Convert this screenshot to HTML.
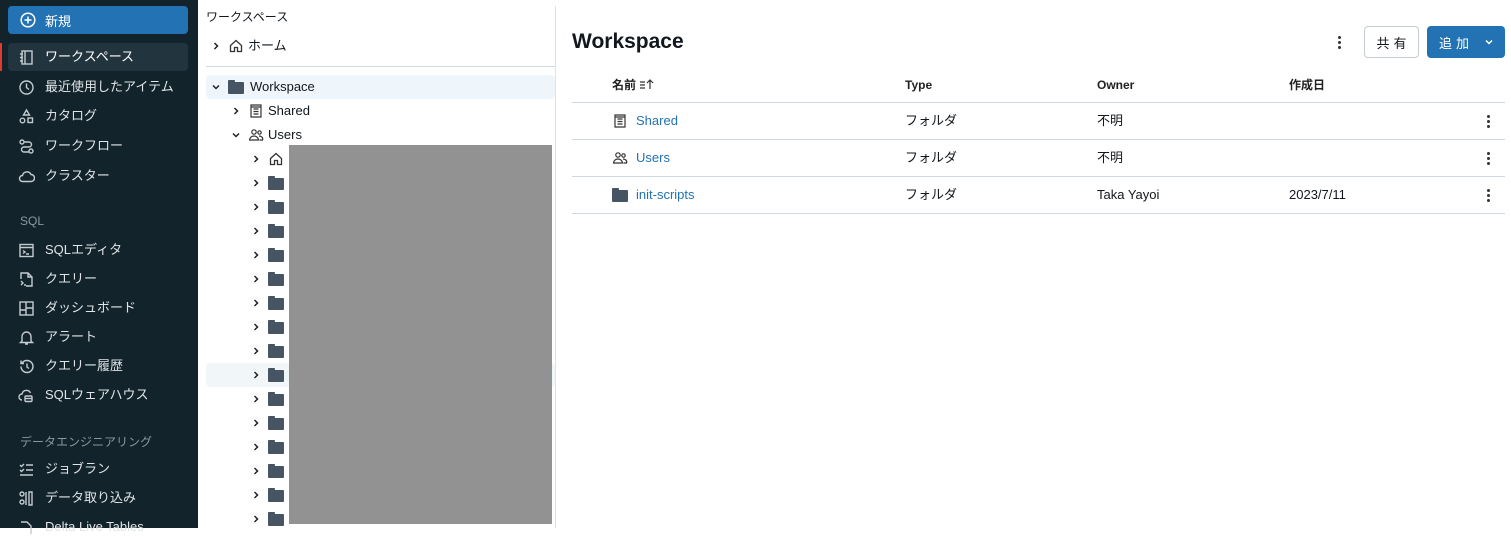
<!DOCTYPE html>
<html><head><meta charset="utf-8"><style>
*{margin:0;padding:0;box-sizing:border-box}
body{width:1511px;height:528px;overflow:hidden;background:#fff;font-family:"Liberation Sans","Noto Sans CJK JP",sans-serif;position:relative;color:#11171c}
.sb{position:absolute;left:0;top:0;width:198px;height:528px;background:#13232b;color:#dfe4e7;font-size:13px}
.sb .it{position:absolute;left:8px;width:180px;height:28px;display:flex;align-items:center;padding-left:10px;line-height:28px}
.sb .it svg{width:17px;height:17px;margin-right:10px;stroke:#c3cbd0;fill:none;stroke-width:1.4;flex:none}
.sb .hd{position:absolute;left:20px;font-size:12px;color:#8a979e}
.tr{position:absolute;font-size:13px;display:flex;align-items:center;height:22px;line-height:22px}
.ch{width:12px;height:12px;margin-right:6px;display:inline-block}
.fd{display:inline-block;width:16px;height:12px;background:#465463;border-radius:1px;position:relative;margin-right:6px;margin-top:2px}
.fd:before{content:"";position:absolute;left:0;top:-2px;width:7px;height:3px;background:#465463;border-radius:1px 1px 0 0}
.th{position:absolute;top:76px;font-size:12px;font-weight:bold;color:#222;height:18px;line-height:18px}
.hl{position:absolute;left:572px;width:933px;height:1px;background:#cdd9e3}
.rw{position:absolute;font-size:13px;height:20px;line-height:20px;display:flex;align-items:center}
.lk{color:#2272b4}
.dots{position:absolute;width:3px}
.dots i{display:block;width:3px;height:3px;background:#333;border-radius:50%;margin-bottom:2px}
</style></head><body>
<svg width="0" height="0" style="position:absolute"><defs>
<symbol id="cr" viewBox="0 0 12 12"><path d="M4.5 3l3 3-3 3" fill="none" stroke="#222" stroke-width="1.5"/></symbol>
<symbol id="cd" viewBox="0 0 12 12"><path d="M3 4.5l3 3 3-3" fill="none" stroke="#222" stroke-width="1.5"/></symbol>
</defs></svg>
<div class="sb">
 <div style="position:absolute;left:8px;top:6px;width:180px;height:28px;background:#2272b4;border-radius:4px;display:flex;align-items:center;padding-left:12px;color:#fff">
  <svg width="16" height="16" viewBox="0 0 16 16" style="margin-right:9px"><circle cx="8" cy="8" r="6.8" stroke="#fff" stroke-width="1.5" fill="none"/><path d="M8 4.5v7M4.5 8h7" stroke="#fff" stroke-width="1.5"/></svg>新規</div>
 <div style="position:absolute;left:0;top:43px;width:2px;height:28px;background:#e03a2f"></div>
 <div class="it" style="top:43px;background:#22353f;border-radius:4px;color:#fff"><svg viewBox="0 0 17 17"><rect x="4" y="2" width="10" height="13"/><path d="M7 2v13M2 5h3M2 8.5h3M2 12h3"/></svg>ワークスペース</div>
 <div class="it" style="top:73px"><svg viewBox="0 0 17 17"><circle cx="8.5" cy="8.5" r="6.5"/><path d="M8.5 4.5v4l2.5 2"/></svg>最近使用したアイテム</div>
 <div class="it" style="top:102px"><svg viewBox="0 0 17 17"><path d="M8.5 2l3 5h-6z"/><circle cx="4.5" cy="12.5" r="2.3"/><rect x="10" y="10" width="4.5" height="4.5"/></svg>カタログ</div>
 <div class="it" style="top:132px"><svg viewBox="0 0 17 17"><circle cx="4" cy="4" r="2"/><circle cx="13" cy="13" r="2"/><path d="M6 4h5a2.5 2.5 0 010 5H6a2.5 2.5 0 000 5h5"/></svg>ワークフロー</div>
 <div class="it" style="top:162px"><svg viewBox="0 0 17 17"><path d="M4.5 13.5a3 3 0 010-6 4.5 4.5 0 018.5-1 3.5 3.5 0 010 7z"/></svg>クラスター</div>
 <div class="hd" style="top:214px">SQL</div>
 <div class="it" style="top:236px"><svg viewBox="0 0 17 17"><rect x="2" y="2.5" width="13" height="12"/><path d="M2 5.5h13M5 8.5l2 1.5-2 1.5M8 12h3"/></svg>SQLエディタ</div>
 <div class="it" style="top:265px"><svg viewBox="0 0 17 17"><path d="M3 8V2h7l4 4v9H8M10 2v4h4M3 10l2 2-2 2M6 14h2"/></svg>クエリー</div>
 <div class="it" style="top:294px"><svg viewBox="0 0 17 17"><rect x="2" y="2" width="13" height="13"/><path d="M8 2v13M8 8h7M2 10h6"/></svg>ダッシュボード</div>
 <div class="it" style="top:323px"><svg viewBox="0 0 17 17"><path d="M4 12V7.5a4.5 4.5 0 019 0V12l1.5 1.5h-12zM7 15h3"/></svg>アラート</div>
 <div class="it" style="top:352px"><svg viewBox="0 0 17 17"><path d="M3 8.5a6 6 0 106-6 6 6 0 00-5 2.5M3 2.5v3h3M9 5.5v3.5l2 1.5"/></svg>クエリー履歴</div>
 <div class="it" style="top:381px"><svg viewBox="0 0 17 17"><path d="M4 13a3 3 0 010-6 4.5 4.5 0 018.5-1"/><rect x="7" y="9" width="7" height="5.5" rx="1"/><path d="M7 11.5h7"/></svg>SQLウェアハウス</div>
 <div class="hd" style="top:433px">データエンジニアリング</div>
 <div class="it" style="top:455px"><svg viewBox="0 0 17 17"><path d="M2 4l1.5 1.5L6 3M8 4h7M2 9l1.5 1.5L6 8M8 9h7M2 14h13"/></svg>ジョブラン</div>
 <div class="it" style="top:484px"><svg viewBox="0 0 17 17"><circle cx="4" cy="4" r="2"/><circle cx="4" cy="12" r="2"/><path d="M8 2v13M11 2v13h3V2z"/></svg>データ取り込み</div>
 <div class="it" style="top:513px"><svg viewBox="0 0 17 17"><path d="M3 3h6l4 4v8"/></svg>Delta Live Tables</div>
</div>

<div style="position:absolute;left:206px;top:8px;font-size:12px">ワークスペース</div>
<div class="tr" style="left:210px;top:35px"><svg class="ch"><use href="#cr"/></svg><svg width="16" height="16" viewBox="0 0 16 16" style="margin-right:4px"><path d="M2.5 7.5L8 2.5l5.5 5v6h-4v-4h-3v4h-4z" fill="none" stroke="#333" stroke-width="1.3"/></svg>ホーム</div>
<div style="position:absolute;left:206px;top:66px;width:349px;height:1px;background:#cdd9e3"></div>
<div style="position:absolute;left:206px;top:75px;width:349px;height:24px;background:#eef5fb;border-radius:4px"></div>
<div class="tr" style="left:210px;top:76px"><svg class="ch"><use href="#cd"/></svg><span class="fd"></span>Workspace</div>
<div class="tr" style="left:230px;top:100px"><svg class="ch"><use href="#cr"/></svg><svg width="16" height="16" viewBox="0 0 16 16" style="margin-right:4px"><path d="M3 2h10v12H3zM5.5 6h5M5.5 8.5h5M5.5 11h5M3 4h10" fill="none" stroke="#333" stroke-width="1.2"/></svg>Shared</div>
<div class="tr" style="left:230px;top:124px"><svg class="ch"><use href="#cd"/></svg><svg width="16" height="16" viewBox="0 0 16 16" style="margin-right:4px"><circle cx="6" cy="5" r="2.2" fill="none" stroke="#333" stroke-width="1.2"/><circle cx="11.5" cy="5.5" r="1.7" fill="none" stroke="#333" stroke-width="1.2"/><path d="M1.5 13a4.5 4 0 019 0zM11 9a3.5 3 0 013.5 4h-3" fill="none" stroke="#333" stroke-width="1.2"/></svg>Users</div>
<div class="tr" style="left:250px;top:148px"><svg class="ch"><use href="#cr"/></svg><svg width="16" height="16" viewBox="0 0 16 16"><path d="M2.5 7.5L8 2.5l5.5 5v6h-4v-4h-3v4h-4z" fill="none" stroke="#333" stroke-width="1.3"/></svg></div>
<div style="position:absolute;left:206px;top:363px;width:349px;height:24px;background:#f1f6f8;border-radius:4px"></div>
<div class="tr" style="left:250px;top:172px"><svg class="ch"><use href="#cr"/></svg><span class="fd"></span></div>
<div class="tr" style="left:250px;top:196px"><svg class="ch"><use href="#cr"/></svg><span class="fd"></span></div>
<div class="tr" style="left:250px;top:220px"><svg class="ch"><use href="#cr"/></svg><span class="fd"></span></div>
<div class="tr" style="left:250px;top:244px"><svg class="ch"><use href="#cr"/></svg><span class="fd"></span></div>
<div class="tr" style="left:250px;top:268px"><svg class="ch"><use href="#cr"/></svg><span class="fd"></span></div>
<div class="tr" style="left:250px;top:292px"><svg class="ch"><use href="#cr"/></svg><span class="fd"></span></div>
<div class="tr" style="left:250px;top:316px"><svg class="ch"><use href="#cr"/></svg><span class="fd"></span></div>
<div class="tr" style="left:250px;top:340px"><svg class="ch"><use href="#cr"/></svg><span class="fd"></span></div>
<div class="tr" style="left:250px;top:364px"><svg class="ch"><use href="#cr"/></svg><span class="fd"></span></div>
<div class="tr" style="left:250px;top:388px"><svg class="ch"><use href="#cr"/></svg><span class="fd"></span></div>
<div class="tr" style="left:250px;top:412px"><svg class="ch"><use href="#cr"/></svg><span class="fd"></span></div>
<div class="tr" style="left:250px;top:436px"><svg class="ch"><use href="#cr"/></svg><span class="fd"></span></div>
<div class="tr" style="left:250px;top:460px"><svg class="ch"><use href="#cr"/></svg><span class="fd"></span></div>
<div class="tr" style="left:250px;top:484px"><svg class="ch"><use href="#cr"/></svg><span class="fd"></span></div>
<div class="tr" style="left:250px;top:508px"><svg class="ch"><use href="#cr"/></svg><span class="fd"></span></div>
<div style="position:absolute;left:289px;top:145px;width:263px;height:379px;background:#929292"></div>
<div style="position:absolute;left:555px;top:6px;width:1px;height:522px;background:#dde3e8"></div>

<div style="position:absolute;left:572px;top:30px;font-size:21px;font-weight:bold">Workspace</div>
<div class="dots" style="left:1338px;top:36px"><i></i><i></i><i></i></div>
<div style="position:absolute;left:1364px;top:26px;width:55px;height:32px;border:1px solid #c4ccd2;border-radius:4px;font-size:13px;display:flex;align-items:center;justify-content:center;letter-spacing:4px;padding-left:4px">共有</div>
<div style="position:absolute;left:1427px;top:26px;width:78px;height:32px;background:#2272b4;border-radius:4px;color:#fff;font-size:13px;display:flex;align-items:center;padding-left:12px;letter-spacing:4px">追加<svg width="12" height="12" viewBox="0 0 12 12" style="margin-left:10px"><path d="M3 4.5l3 3 3-3" fill="none" stroke="#fff" stroke-width="1.5"/></svg></div>
<div class="th" style="left:612px">名前 <svg width="16" height="12" viewBox="0 0 16 12" style="vertical-align:-1px"><path d="M1 4h5M1 7h5M1 10h5M11 11V2M8 5l3-3 3 3" fill="none" stroke="#333" stroke-width="1.2"/></svg></div>
<div class="th" style="left:905px">Type</div>
<div class="th" style="left:1097px">Owner</div>
<div class="th" style="left:1289px">作成日</div>
<div class="hl" style="top:102px"></div>
<div class="hl" style="top:139px"></div>
<div class="hl" style="top:176px"></div>
<div class="hl" style="top:213px"></div>

<div class="rw" style="left:612px;top:111px"><svg width="16" height="16" viewBox="0 0 16 16" style="margin-right:8px"><path d="M3 2h10v12H3zM5.5 6h5M5.5 8.5h5M5.5 11h5M3 4h10" fill="none" stroke="#333" stroke-width="1.2"/></svg><span class="lk">Shared</span></div>
<div class="rw" style="left:905px;top:111px">フォルダ</div><div class="rw" style="left:1097px;top:111px">不明</div>
<div class="dots" style="left:1487px;top:115px"><i></i><i></i><i></i></div>

<div class="rw" style="left:612px;top:148px"><svg width="16" height="16" viewBox="0 0 16 16" style="margin-right:8px"><circle cx="6" cy="5" r="2.2" fill="none" stroke="#333" stroke-width="1.2"/><circle cx="11.5" cy="5.5" r="1.7" fill="none" stroke="#333" stroke-width="1.2"/><path d="M1.5 13a4.5 4 0 019 0zM11 9a3.5 3 0 013.5 4h-3" fill="none" stroke="#333" stroke-width="1.2"/></svg><span class="lk">Users</span></div>
<div class="rw" style="left:905px;top:148px">フォルダ</div><div class="rw" style="left:1097px;top:148px">不明</div>
<div class="dots" style="left:1487px;top:152px"><i></i><i></i><i></i></div>

<div class="rw" style="left:612px;top:185px"><span class="fd" style="margin-right:8px"></span><span class="lk">init-scripts</span></div>
<div class="rw" style="left:905px;top:185px">フォルダ</div><div class="rw" style="left:1097px;top:185px">Taka Yayoi</div><div class="rw" style="left:1289px;top:185px">2023/7/11</div>
<div class="dots" style="left:1487px;top:189px"><i></i><i></i><i></i></div>
</body></html>
